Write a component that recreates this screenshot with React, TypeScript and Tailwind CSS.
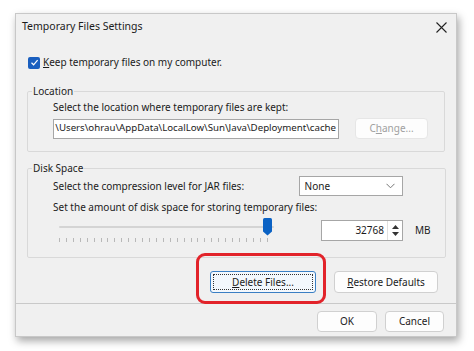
import React from 'react';

const font = { fontFamily: '"Noto Sans", "Open Sans", sans-serif' };

const Btn: React.FC<{ className?: string; children: React.ReactNode; disabled?: boolean }> = ({ className = '', children, disabled }) => (
  <div
    className={`flex items-center justify-center h-[21px] rounded-[4px] border bg-[#fdfdfd] ${
      disabled ? 'border-[#e6e6e6] text-[#a0a0a0] bg-[#f6f6f6]' : 'border-[#d0d0d0] text-[#1b1b1b]'
    } ${className}`}
  >
    {children}
  </div>
);

const App: React.FC = () => {
  const ticks = Array.from({ length: 31 });

  return (
    <div className="w-[474px] h-[351px] bg-white pl-[15px] pt-[13px] text-[10px] text-[#1b1b1b]" style={font}>
      <div className="w-[442px] h-[324px] bg-[#f0f0f0] border border-[#c8c8c8] shadow-[2px_4px_8px_rgba(0,0,0,0.35)] flex flex-col">
        {/* title bar */}
        <div className="h-[26px] flex items-center justify-between pl-[6px] pr-[9px]">
          <span className="text-[10.5px]">Temporary Files Settings</span>
          <svg width="11" height="11" viewBox="0 0 11 11">
            <path d="M0.5 0.5 L10.5 10.5 M10.5 0.5 L0.5 10.5" stroke="#222" strokeWidth="1.1" />
          </svg>
        </div>

        {/* keep checkbox */}
        <div className="flex items-center gap-[3px] pl-[12px] mt-[15px]">
          <div className="w-[12px] h-[12px] rounded-[2px] bg-[#1a5fbf] flex items-center justify-center">
            <svg width="9" height="9" viewBox="0 0 9 9">
              <path d="M1.5 4.8 L3.6 6.8 L7.6 2.2" stroke="white" strokeWidth="1.2" fill="none" />
            </svg>
          </div>
          <span>
            <u>K</u>eep temporary files on my computer.
          </span>
        </div>

        {/* Location */}
        <fieldset className="mx-[11px] mt-[14px] border border-[#d9d9d9] rounded-[2px] pl-[25px] pr-[16px] pb-[8px] h-[68px]">
          <legend className="ml-[-21px] px-[1px] leading-[14px]">Location</legend>
          <div className="mt-[1px] leading-[16px]">Select the location where temporary files are kept:</div>
          <div className="flex items-center mt-[3px] gap-[16px]">
            <div className="w-[286px] shrink-0 h-[20px] border border-[#a6a6a6] bg-white overflow-hidden whitespace-nowrap flex items-center justify-end pr-[2px] text-[9.7px]">
              <span>\Users\ohrau\AppData\LocalLow\Sun\Java\Deployment\cache</span>
            </div>
            <Btn disabled className="w-[73px] shrink-0 h-[20px]">
              C<u>h</u>ange...
            </Btn>
          </div>
        </fieldset>

        {/* Disk Space */}
        <fieldset className="mx-[11px] mt-[9px] border border-[#d9d9d9] rounded-[2px] pl-[25px] pr-[14px] h-[97px]">
          <legend className="ml-[-21px] px-[1px] leading-[14px]">Disk Space</legend>
          <div className="flex items-center justify-between mt-[1px]">
            <span>Select the compression level for JAR files:</span>
            <div className="w-[104px] h-[20px] border border-[#a6a6a6] bg-white flex items-center justify-between pl-[5px] pr-[7px] mr-[28px]">
              <span>None</span>
              <svg width="9" height="6" viewBox="0 0 9 6">
                <path d="M0.5 0.8 L4.5 4.8 L8.5 0.8" stroke="#777" strokeWidth="1" fill="none" />
              </svg>
            </div>
          </div>
          <div className="mt-[3px] leading-[16px]">Set the amount of disk space for storing temporary files:</div>
          <div className="flex items-start mt-[3px]">
            {/* slider */}
            <div className="w-[215px] ml-[6px] flex flex-col">
              <div className="relative h-[18px] flex items-center">
                <div className="w-full h-[2px] bg-[#d4d4d4] rounded" />
                <svg className="absolute left-[203px] top-0" width="11" height="18" viewBox="0 0 11 18">
                  <path d="M1 1.5 Q1 0 2.5 0 L8.5 0 Q10 0 10 1.5 L10 13.5 L5.5 17.5 L1 13.5 Z" fill="#0b62c4" />
                </svg>
              </div>
              <div className="flex justify-between mt-[2px] pr-[6px]">
                {ticks.map((_, i) => (
                  <div key={i} className="w-[1px] h-[4px] bg-[#b8b8b8]" />
                ))}
              </div>
            </div>
            <div className="ml-[47px] mt-[2px] w-[82px] h-[21px] border border-[#a6a6a6] bg-white flex items-center">
              <span className="flex-1 text-right pr-[3px]">32768</span>
              <div className="w-[15px] h-full flex flex-col items-center justify-center gap-[3px] border-l border-[#e0e0e0]">
                <svg width="7" height="4" viewBox="0 0 7 4">
                  <path d="M0 4 L3.5 0 L7 4 Z" fill="#333" />
                </svg>
                <svg width="7" height="4" viewBox="0 0 7 4">
                  <path d="M0 0 L3.5 4 L7 0 Z" fill="#333" />
                </svg>
              </div>
            </div>
            <span className="ml-[12px] mt-[2px] leading-[21px]">MB</span>
          </div>
        </fieldset>

        {/* action buttons */}
        <div className="flex justify-end items-center gap-[18px] pr-[18px] mt-[13px]">
          <div className="relative">
            <div className="absolute left-[-14px] top-[-18px] w-[130px] h-[51px] border-[3px] border-[#e2232a] rounded-[9px]" />
            <div className="w-[106px] h-[22px] rounded-[3px] border border-[#3a7fc4] bg-[#f3f8fd] p-[2px]">
              <div className="w-full h-full border border-dotted border-[#333] flex items-center justify-center">
                <span>
                  <u>D</u>elete Files...
                </span>
              </div>
            </div>
          </div>
          <Btn className="w-[104px] h-[22px]">
            <u>R</u>estore Defaults
          </Btn>
        </div>

        {/* footer */}
        <div className="mt-[10px] border-t border-[#c9c9c9] flex-1 flex justify-end items-start gap-[8px] pr-[12px] pt-[7px]">
          <Btn className="w-[60px] h-[20px]">OK</Btn>
          <Btn className="w-[59px] h-[20px]">Cancel</Btn>
        </div>
      </div>
    </div>
  );
};

export default App;
